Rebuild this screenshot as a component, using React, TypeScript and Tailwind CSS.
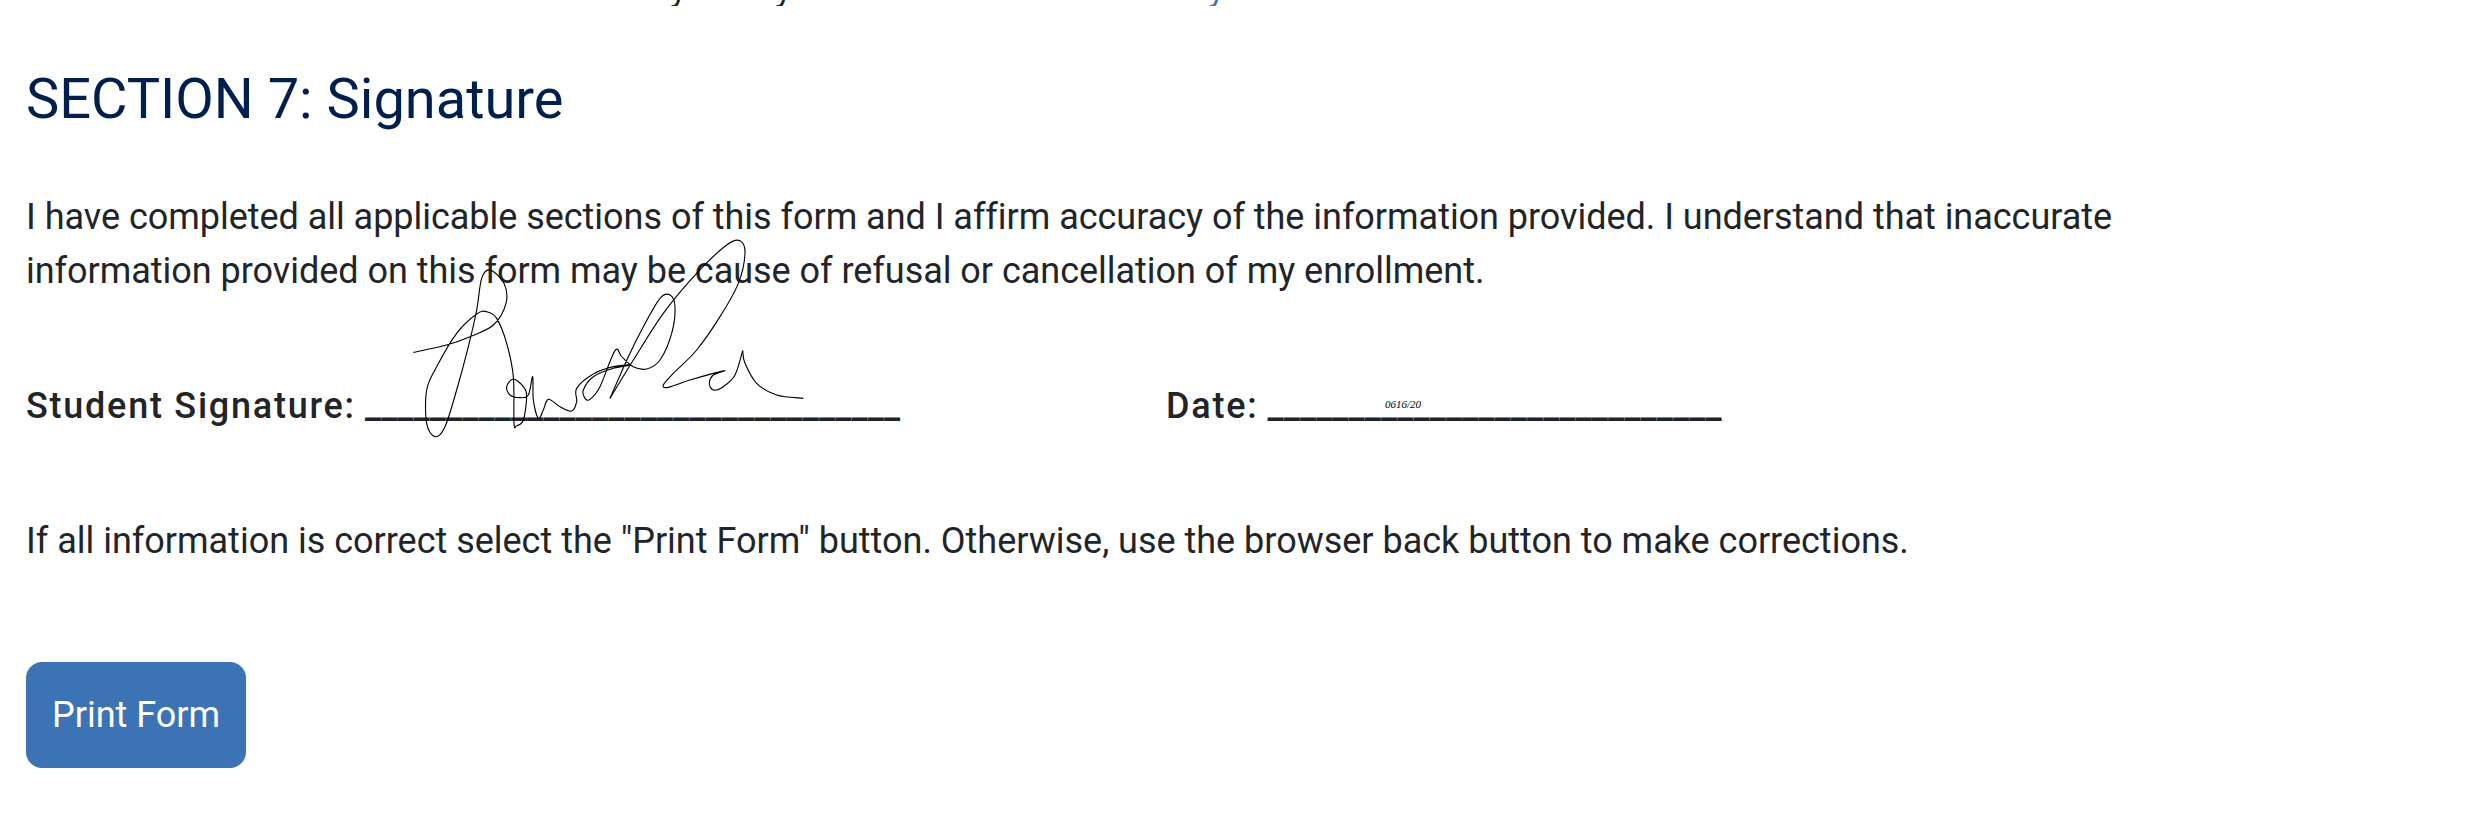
const signature: [number, number][][] = [
  [
    [100, 397], [200, 375], [270, 350], [340, 315], [378, 250], [372, 190], [330, 150], [305, 175], [290, 270],
    [265, 380], [230, 510], [195, 620], [165, 650], [140, 610], [140, 510], [170, 440], [230, 340], [290, 282],
    [320, 275], [350, 295], [380, 370], [400, 470], [402, 610], [410, 617], [430, 600], [440, 530], [430, 500],
    [400, 477], [380, 500], [390, 525], [420, 533], [445, 525], [458, 470], [460, 540], [475, 595], [490, 570],
    [505, 538], [540, 560], [575, 573], [590, 545], [590, 505], [640, 462], [700, 440], [752, 435], [700, 445],
    [640, 470], [610, 510], [615, 535], [630, 538], [660, 500], [705, 392], [725, 410], [760, 440], [800, 447],
    [840, 420], [875, 340], [885, 260], [870, 225], [840, 235], [790, 320], [745, 410], [690, 535],
  ],
  [
    [690, 535], [760, 420], [850, 280], [950, 160], [1040, 75], [1080, 62], [1095, 100], [1075, 190], [1020, 290],
    [950, 390], [880, 460], [850, 495], [865, 502], [930, 480], [1000, 460], [1035, 452], [1000, 465], [988, 490],
    [1000, 510], [1030, 500], [1065, 465], [1088, 392],
  ],
  [[1088, 392], [1095, 430], [1130, 490], [1190, 525], [1270, 535]],
]

// catmull-rom through the traced points
function toPath(pts: [number, number][]) {
  let d = `M${pts[0][0]} ${pts[0][1]}`
  for (let i = 0; i < pts.length - 1; i++) {
    const p0 = pts[i - 1] ?? pts[i]
    const p1 = pts[i]
    const p2 = pts[i + 1]
    const p3 = pts[i + 2] ?? p2
    const c1x = p1[0] + (p2[0] - p0[0]) / 6
    const c1y = p1[1] + (p2[1] - p0[1]) / 6
    const c2x = p2[0] - (p3[0] - p1[0]) / 6
    const c2y = p2[1] - (p3[1] - p1[1]) / 6
    d += `C${c1x} ${c1y} ${c2x} ${c2y} ${p2[0]} ${p2[1]}`
  }
  return d
}

export default function App() {
  return (
    <div className="relative h-[840px] w-[2492px] overflow-hidden bg-white font-['Roboto',sans-serif] text-[36px] leading-[54px] tracking-[-0.012px] text-[#212529]">
      <div className="flex h-[6px] items-end overflow-hidden pl-[670px] text-[#212529]">
        <span className="leading-none">y</span>
        <span className="ml-[88px] leading-none">y</span>
        <span className="ml-[416px] leading-none text-[#3c73b4]">y</span>
      </div>
      <div className="w-[2200px] px-[26px]">
        <h2 className="mt-[60px] text-[56px] leading-[67px] font-normal text-[#001f4d]">SECTION 7: Signature</h2>
        <p className="mt-[57px] tracking-[-0.03px]">
          I have completed all applicable sections of this form and I affirm accuracy of the information provided. I
          understand that inaccurate information provided on this form may be cause of refusal or cancellation of my
          enrollment.
        </p>
        <div className="relative mt-[53px] flex h-[82px] items-end font-medium tracking-[1.75px]">
          <div className="w-[1140px] whitespace-nowrap">
            Student Signature:<span className="tracking-[0.1px]"> _________________________________</span>
          </div>
          <div className="whitespace-nowrap">
            Date:<span className="tracking-[0.1px]"> ____________________________</span>
          </div>
          <span className="absolute top-[48px] left-[1359px] font-['Liberation_Serif',serif] text-[11px] leading-none font-normal tracking-normal text-black italic">
            0616/20
          </span>
        </div>
        <p className="mt-[81px]">
          If all information is correct select the "Print Form" button. Otherwise, use the browser back button to make
          corrections.
        </p>
        <button className="mt-[94px] block h-[106px] w-[220px] rounded-[16px] bg-[#3c73b4] text-white">Print Form</button>
      </div>
      <svg
        className="pointer-events-none absolute top-[220px] left-[380px] h-[230px] w-[480px]"
        viewBox="0 0 1440 690"
        fill="none"
        stroke="#000"
        strokeWidth="3.4"
        strokeLinejoin="round"
      >
        {signature.map((pts, i) => (
          <path key={i} d={toPath(pts)} />
        ))}
      </svg>
    </div>
  )
}
